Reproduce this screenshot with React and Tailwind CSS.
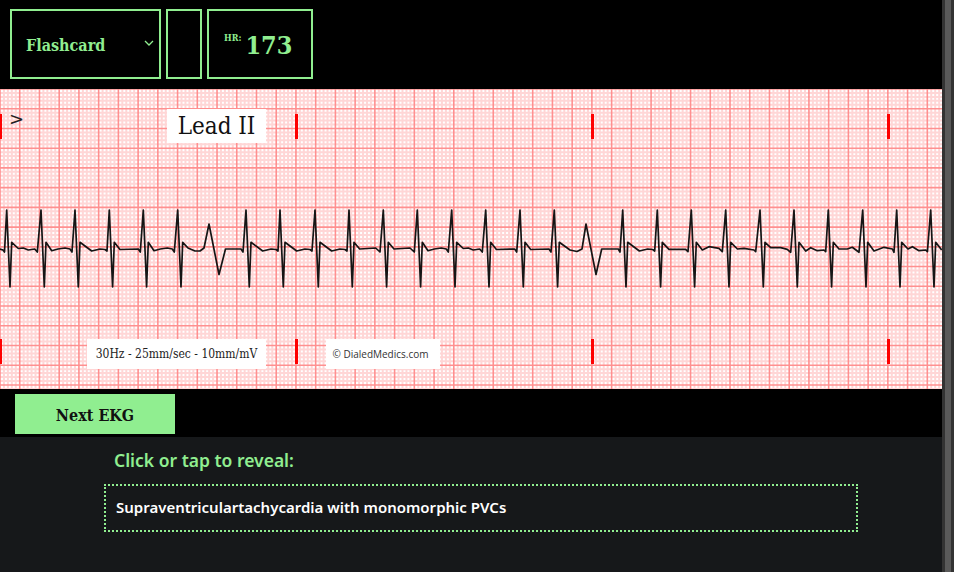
import React from 'react';

const GREEN = '#90ee90';

// tail of each beat after the J point: [offset from R, y]
const WOBBLE = [[11.6, 248.5], [16.6, 248], [21.6, 250], [28, 249], [30.6, 252]];
const BUMP = [[10.7, 250.7], [17, 249], [24, 248], [29, 249], [31, 252]];
const DIP = [[16.7, 251], [25, 249], [30, 249.5], [32, 251]];
const FLAT = [[10.7, 249.5], [29, 249], [31, 252]];
const LEVEL = [[10.7, 249], [26.7, 248], [31, 252]];
const LONG = [[11.7, 249.3], [28.3, 249.3], [30.7, 251.7]];
const RISE = [[10.7, 247.7], [20.7, 247.7], [27.3, 249.3], [30.7, 252.3]];
const DOUBLE = [[11.7, 251], [16.7, 247.7], [23.3, 250.7], [30, 250], [31.7, 251.7]];
const HUMP = [[11, 250], [17.7, 246.7], [27.7, 248.3], [31, 251.7]];
const LATE = [[10.7, 249], [19, 249], [24, 247.3], [30.7, 252.3]];
const SLOPE = [[11.3, 251], [21.3, 247.3], [29.7, 249], [31.3, 252.3]];
const NOTCH = [[11.3, 249], [15.7, 246.7], [22.3, 250.7], [29, 250], [30.7, 251.7]];
const SOFT = [[11.7, 249], [18.3, 248.3], [28.3, 250], [30, 251.7]];

const beats = [
  { x: 6.7, tail: WOBBLE },
  { x: 41, tail: BUMP },
  { x: 75, tail: DIP },
  { x: 109.3, tail: FLAT },
  { x: 143.3, tail: BUMP },
  { x: 177.7, pvc: [[188, 248], [195, 251], [200, 251], [204, 248], [209, 224], [219, 274.5], [225.5, 249], [241, 249], [243, 252]] },
  { x: 246, tail: DIP },
  { x: 280, tail: DIP },
  { x: 315, tail: DIP },
  { x: 349, tail: LEVEL },
  { x: 383.3, tail: LEVEL },
  { x: 417.3, tail: BUMP },
  { x: 451.7, tail: WOBBLE },
  { x: 485.7, tail: FLAT },
  { x: 520, tail: FLAT },
  { x: 554.3, pvc: [[570, 250], [577, 251.5], [582, 249], [586, 224], [596, 274.5], [601.7, 249], [618.3, 249], [620, 252]] },
  { x: 622.7, tail: DIP },
  { x: 657.3, tail: LONG },
  { x: 691.3, tail: HUMP },
  { x: 725.7, tail: SOFT },
  { x: 760, tail: RISE },
  { x: 794, tail: DOUBLE },
  { x: 828.3, tail: LATE },
  { x: 862.7, tail: SLOPE },
  { x: 896.7, tail: NOTCH },
  { x: 930.7, tail: [[11, 250]] },
];

const tracePoints = () => {
  const pts = [[0, 249], [3, 250], [4.5, 252]];
  beats.forEach((b) => {
    pts.push([b.x, 210], [b.x + 3.3, 287], [b.x + 5, 242.3]);
    if (b.pvc) pts.push(...b.pvc);
    else b.tail.forEach(([dx, y]) => pts.push([b.x + dx, y]));
  });
  return pts.map((p) => p.join(',')).join(' ');
};

const ticks = [0, 296, 592, 888];
const STEP = 19.73 / 5;
const columns = Array.from({ length: 240 }, (_, i) => i);
const rows = Array.from({ length: 77 }, (_, i) => i);

const EkgStrip = () => (
  <svg className="block w-full h-full" viewBox="0 89 942 300">
    <rect x="0" y="89" width="942" height="300" fill="#fff" />
    {columns.filter((i) => i % 5).map((i) => (
      <line key={`c${i}`} x1={i * STEP} x2={i * STEP} y1="89" y2="389" stroke="#ffd6d6" strokeWidth="2" />
    ))}
    {rows.filter((i) => i % 5).map((i) => (
      <line key={`r${i}`} y1={89 + i * STEP} y2={89 + i * STEP} x1="0" x2="942" stroke="#ffd6d6" strokeWidth="2" />
    ))}
    {columns.filter((i) => i % 5 === 0).map((i) => (
      <line key={`C${i}`} x1={i * STEP} x2={i * STEP} y1="89" y2="389" stroke="#ff9090" strokeWidth="1.6" />
    ))}
    {rows.filter((i) => i % 5 === 0).map((i) => (
      <line key={`R${i}`} y1={89 + i * STEP} y2={89 + i * STEP} x1="0" x2="942" stroke="#ff9090" strokeWidth="1.6" />
    ))}
    {ticks.map((x) => (
      <g key={x} fill="#ff0000">
        <rect x={x - 1} y="114" width="3" height="25" />
        <rect x={x - 1} y="339" width="3" height="25" />
      </g>
    ))}
    <polyline points={tracePoints()} fill="none" stroke="#151515" strokeWidth="1.7" strokeLinejoin="round" />
  </svg>
);

const SERIF = "font-['DejaVu_Serif_Condensed','DejaVu_Serif',serif]";

export default function App() {
  return (
    <div className="flex h-[572px] w-[954px] overflow-hidden bg-black">
      <div className="flex w-[942px] flex-col">
        {/* Top bar */}
        <div className={`flex h-[89px] gap-[5px] pl-[10px] pt-[9px] ${SERIF}`}>
          <div className="flex h-[70px] w-[151px] items-center justify-between border-2 border-[#90ee90] pl-[14px] pr-[3px]">
            <span className="mt-[4px] text-[16px] font-bold text-[#90ee90]">Flashcard</span>
            <svg className="mr-[1px] mb-[2px]" width="12" height="12" viewBox="0 0 12 12" fill="none" stroke={GREEN} strokeWidth="1.3">
              <path d="M2 4l4 4 4-4" />
            </svg>
          </div>
          <div className="h-[70px] w-[36px] border-2 border-[#90ee90]" />
          <div className="flex h-[70px] w-[106px] items-center border-2 border-[#90ee90] pl-[15px] text-[#90ee90]">
            <span className="mb-[10px] mr-[4px] text-[9px] font-bold">HR:</span>
            <span className="mt-[4px] text-[25px] font-bold">173</span>
          </div>
        </div>

        {/* EKG strip */}
        <div className="relative h-[300px]">
          <EkgStrip />
          <span className="absolute left-[9px] top-[18px] font-['DejaVu_Sans',sans-serif] text-[18px] leading-[24px] text-[#222]">&gt;</span>
          <div className={`absolute left-[167px] top-[20px] flex h-[34px] w-[99px] items-center justify-center bg-white text-[24px] text-[#111] ${SERIF}`}>Lead II</div>
          <div className={`absolute left-[87px] top-[250px] flex h-[30px] w-[179px] items-center justify-center bg-white text-[12px] text-[#222] ${SERIF}`}>30Hz - 25mm/sec - 10mm/mV</div>
          <div className="absolute left-[326px] top-[250px] flex h-[30px] w-[114px] items-center justify-center bg-white pr-[5px] font-['Open_Sans',sans-serif] text-[10px] text-[#333]">© DialedMedics.com</div>
        </div>

        {/* Next button */}
        <div className="flex h-[48px] items-start pl-[15px] pt-[5px]">
          <button className={`h-[40px] w-[160px] pt-[3px] bg-[#90ee90] text-[16px] font-bold text-[#111] ${SERIF}`}>Next EKG</button>
        </div>

        {/* Answer */}
        <div className="flex-1 bg-[#16181a] pl-[104px] pt-[11px] font-['Noto_Sans',sans-serif]">
          <div className="pl-[10px] text-[17.5px] font-semibold leading-[24px] text-[#90ee90]">Click or tap to reveal:</div>
          <div className="mt-[12px] flex h-[48px] w-[754px] items-center border-2 border-dotted border-[#90ee90] pb-[2px] pl-[10px] text-[15px] font-semibold text-white">
            Supraventriculartachycardia with monomorphic PVCs
          </div>
        </div>
      </div>

      {/* Scrollbar */}
      <div className="flex w-[12px] justify-center bg-[#333333]">
        <div className="w-[6px] bg-[#5a5a5a]" />
      </div>
    </div>
  );
}
